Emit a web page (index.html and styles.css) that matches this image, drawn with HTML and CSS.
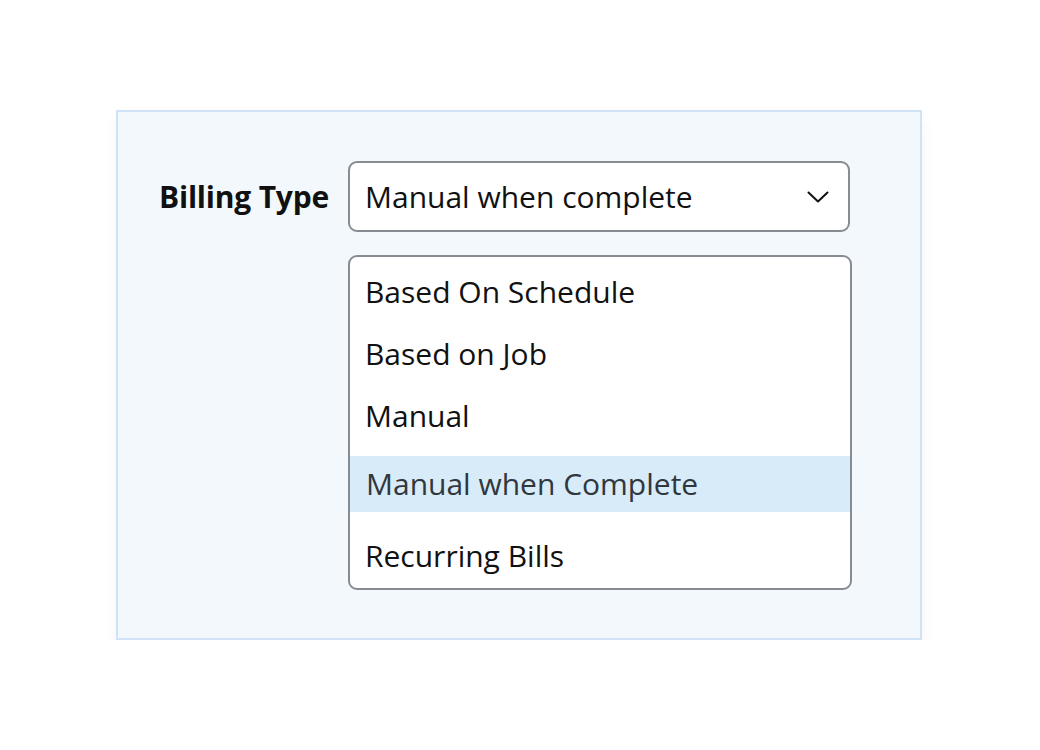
FILE: index.html
```html
<!DOCTYPE html>
<html lang="en">
<head>
  <meta charset="UTF-8">
  <title>Billing Type</title>
  <link rel="stylesheet" href="styles.css">
</head>
<body>

  <div class="panel">
    <div class="field">
      <label class="field-label">Billing Type</label>
      <div class="field-control">
        <div class="select">
          <span class="select-value">Manual when complete</span>
          <svg class="chevron" width="22" height="12" viewBox="0 0 22 12">
            <path d="M1.5 1.5 L11 10.5 L20.5 1.5" fill="none" stroke="#111" stroke-width="2" stroke-linecap="round" stroke-linejoin="round"/>
          </svg>
        </div>

        <ul class="options">
          <li class="option">Based On Schedule</li>
          <li class="option">Based on Job</li>
          <li class="option">Manual</li>
          <li class="option active">Manual when Complete</li>
          <li class="option">Recurring Bills</li>
        </ul>
      </div>
    </div>
  </div>

</body>
</html>
```

FILE: styles.css
```css
:root {
  --panel-bg: #f3f8fc;
  --panel-border: #cfe2f6;
  --control-border: #878c93;
  --text-primary: #111111;
  --text-muted: #30373d;
  --highlight: #d8ebf8;
}

* {
  box-sizing: border-box;
}

body {
  margin: 0;
  background: #ffffff;
  font-family: 'Open Sans', 'Noto Sans', sans-serif;
  color: var(--text-primary);
  padding: 110px 0 0 116px;
}

.panel {
  width: 806px;
  height: 530px;
  background: var(--panel-bg);
  border: 2px solid var(--panel-border);
  box-shadow: 0 10px 12px rgba(110, 120, 150, 0.08);
  padding: 49px 0 0 41px;
}

.field {
  display: flex;
  align-items: flex-start;
  gap: 19px;
}

.field-label {
  font-size: 30px;
  font-weight: 700;
  line-height: 72px;
  letter-spacing: -0.2px;
}

.field-control {
  display: flex;
  flex-direction: column;
  gap: 23px;
}

.select {
  width: 502px;
  height: 71px;
  background: #ffffff;
  border: 2px solid var(--control-border);
  border-radius: 9px;
  display: flex;
  align-items: center;
  justify-content: space-between;
  padding: 0 19px 0 15px;
}

.select-value {
  font-size: 30px;
}

.options {
  list-style: none;
  margin: 0;
  width: 504px;
  background: #ffffff;
  border: 2px solid var(--control-border);
  border-radius: 9px;
  padding: 4px 0 1px;
  overflow: hidden;
}

.option {
  height: 62px;
  line-height: 62px;
  padding-left: 15px;
  font-size: 30px;
}

.option.active {
  height: 56px;
  line-height: 56px;
  margin: 9px 0 13px;
  padding-left: 16px;
  background: var(--highlight);
  color: var(--text-muted);
}
```
